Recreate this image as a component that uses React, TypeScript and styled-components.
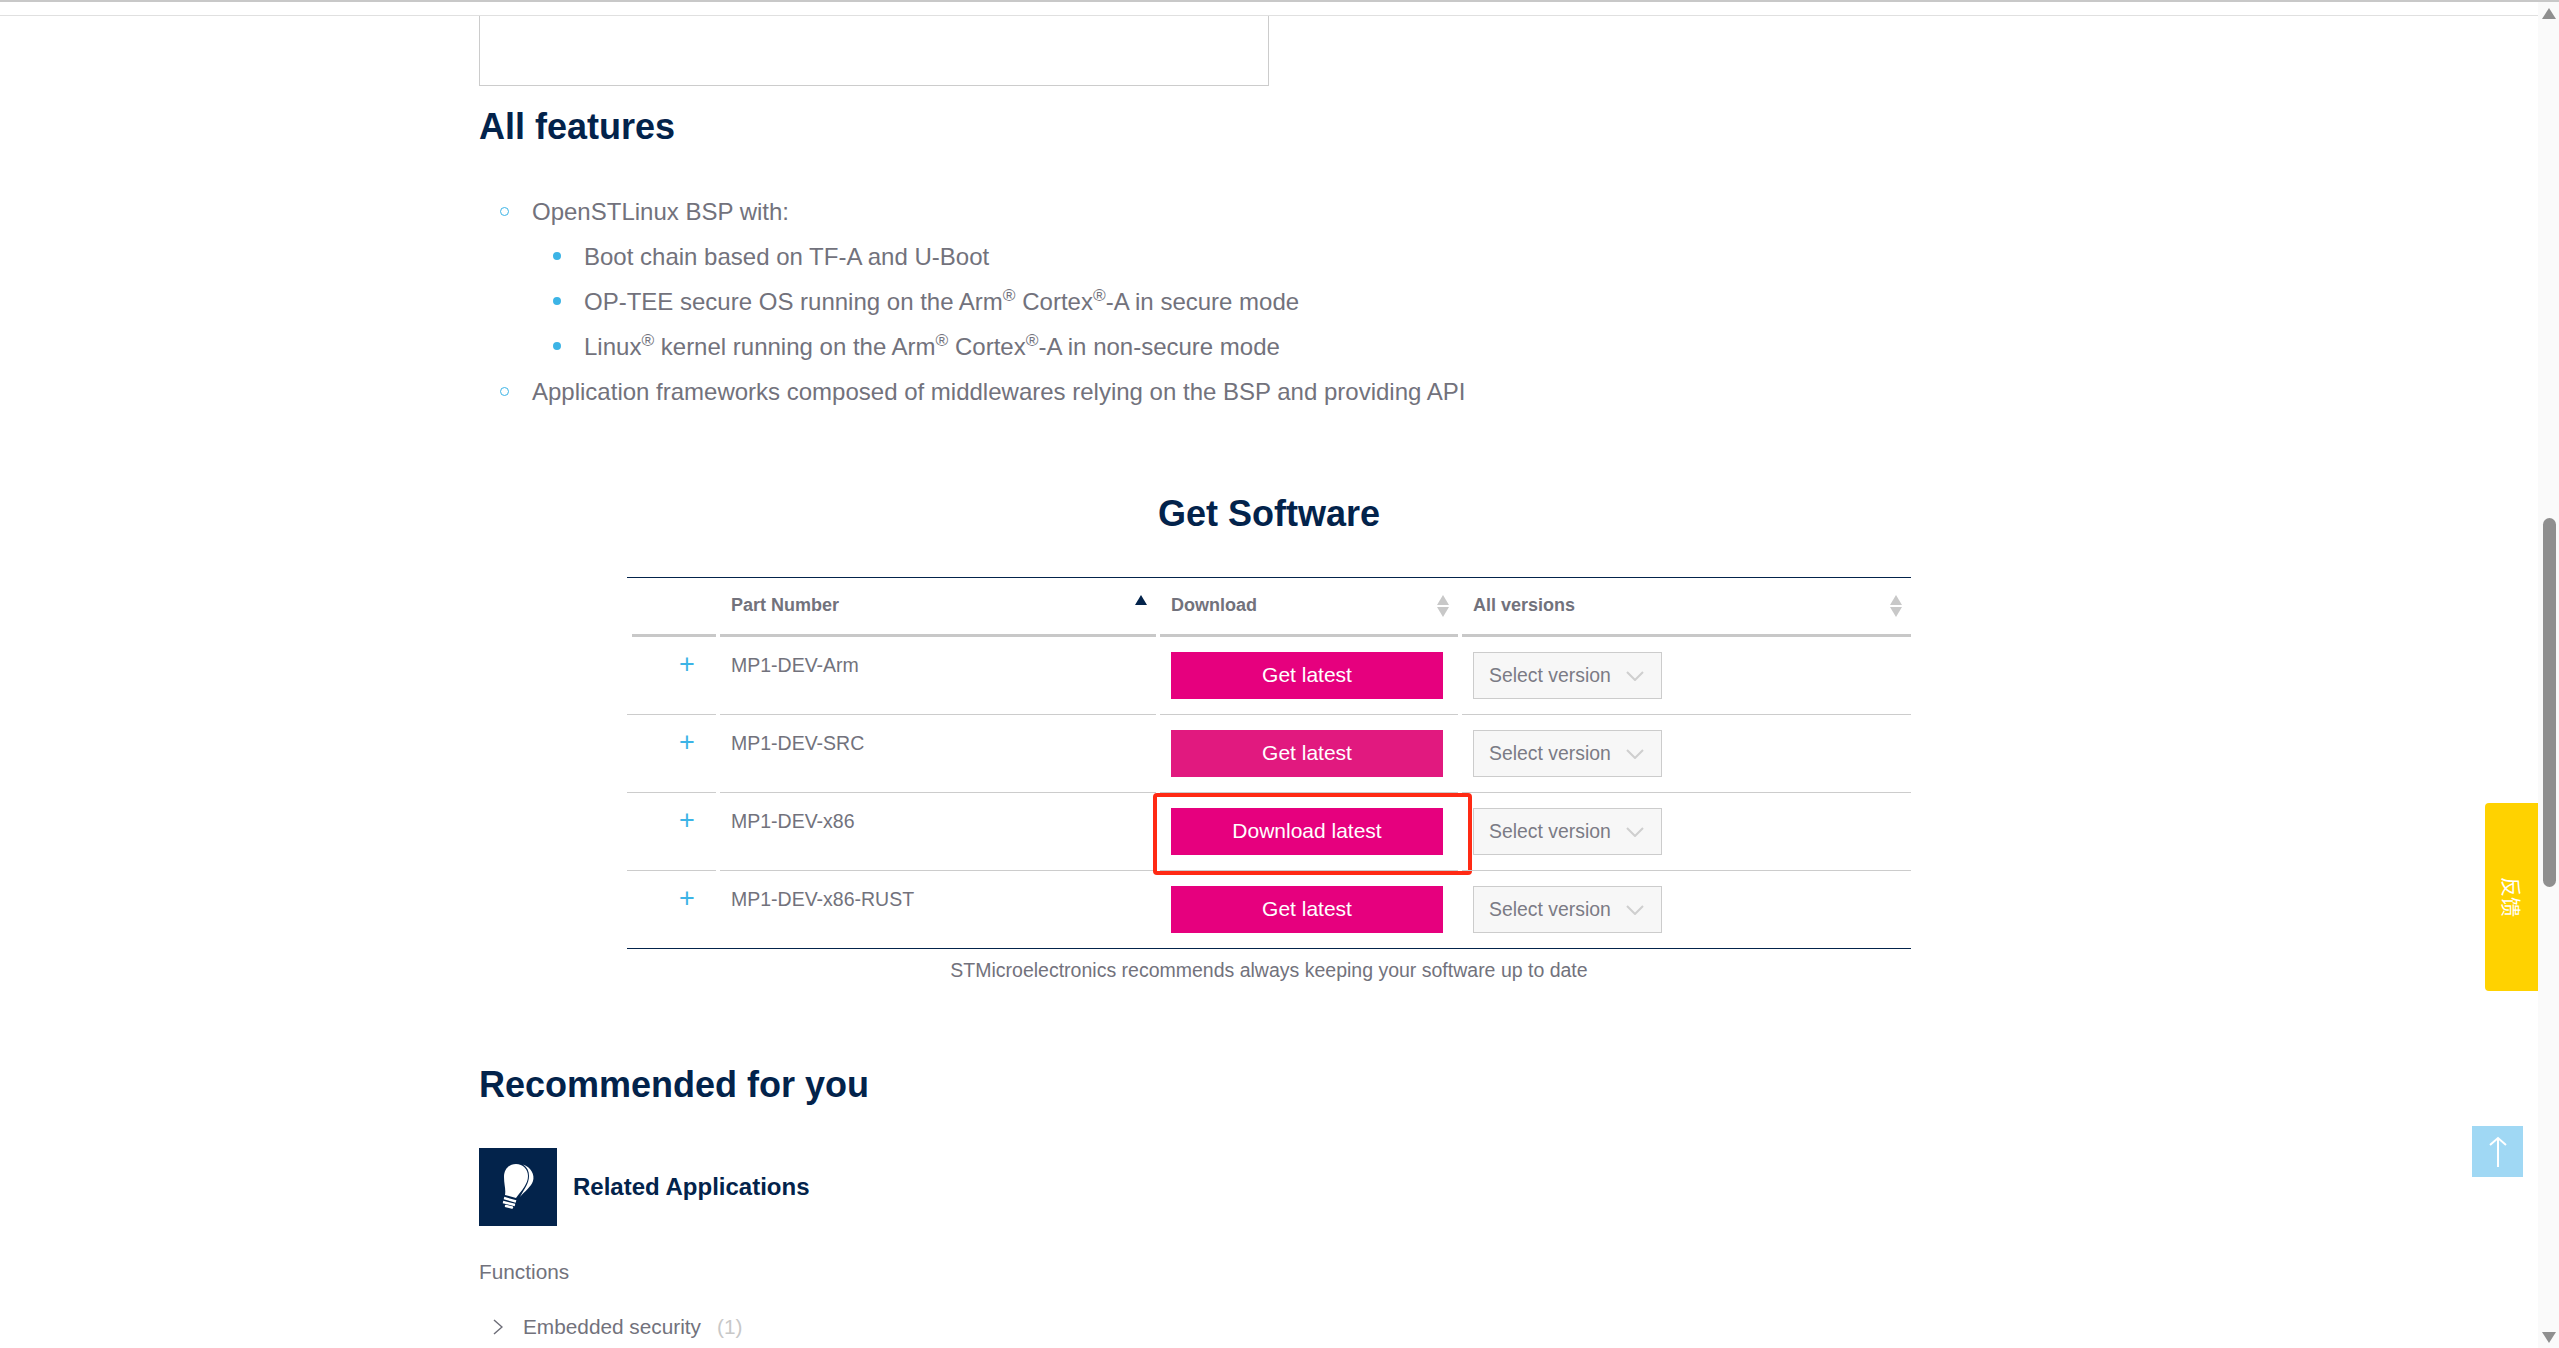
import React from 'react';
import styled, { createGlobalStyle } from 'styled-components';

const GlobalStyle = createGlobalStyle`
  html, body {
    margin: 0;
    height: 100%;
    overflow: hidden;
    background: #fff;
  }
  body {
    font-family: 'Liberation Sans', Arial, sans-serif;
    color: #72727c;
  }
  sup {
    font-size: 0.72em;
    line-height: 0;
  }
`;

const St = {
  Window: styled.div`
    position: relative;
    display: flex;
    height: 1348px;
    overflow: hidden;
    border-top: 2px solid #c8c8c8;
    box-sizing: border-box;
  `,
  Page: styled.main`
    flex: 1;
    min-width: 0;
  `,
  HeaderEdge: styled.div`
    height: 13px;
    border-bottom: 1px solid #e0e0e0;
  `,
  Container: styled.div`
    width: 1580px;
    margin: 0 auto;
  `,
  Frame: styled.div`
    width: 790px;
    height: 70px;
    box-sizing: border-box;
    border: 1px solid #ccc;
    border-top: 0;
    margin-bottom: 19px;
  `,
  Title: styled.h2<{ $center?: boolean }>`
    margin: 0;
    font-size: 36px;
    line-height: 44px;
    font-weight: 700;
    color: #03234b;
    text-align: ${(p) => (p.$center ? 'center' : 'left')};
  `,
  FeatureList: styled.ul`
    list-style: none;
    margin: 40px 0 0;
    padding: 0 0 0 53px;
    font-size: 24px;
    line-height: 45px;
  `,
  SubList: styled.ul`
    list-style: none;
    margin: 0;
    padding: 0 0 0 52px;
  `,
  Item: styled.li<{ $ring?: boolean }>`
    position: relative;
    &::before {
      content: '';
      position: absolute;
      left: ${(p) => (p.$ring ? '-32px' : '-31px')};
      top: 18px;
      width: ${(p) => (p.$ring ? '9px' : '8px')};
      height: ${(p) => (p.$ring ? '9px' : '8px')};
      box-sizing: border-box;
      border-radius: 50%;
      border: ${(p) => (p.$ring ? '1.5px solid #3cb4e6' : '4px solid #3cb4e6')};
    }
  `,
  SoftwareSection: styled.section`
    margin-top: 78px;
  `,
  Table: styled.div`
    width: 1284px;
    margin: 41px auto 0;
    border-top: 1px solid #03234b;
    border-bottom: 1px solid #03234b;
  `,
  HeadRow: styled.div`
    display: grid;
    grid-template-columns: 84px 436px 298px 449px;
    column-gap: 4px;
    margin-left: 5px;
    height: 59px;
  `,
  HeadCell: styled.div`
    position: relative;
    display: flex;
    align-items: flex-start;
    padding: 16px 11px 0;
    font-size: 18px;
    line-height: 22px;
    font-weight: 700;
    border-bottom: 3px solid #c8c8c8;
  `,
  SortIcon: styled.svg`
    position: absolute;
    top: 17px;
    right: 9px;
    width: 12px;
    height: 22px;
  `,
  Row: styled.div`
    display: grid;
    grid-template-columns: 89px 436px 298px 449px;
    column-gap: 4px;
    height: 78px;
    &:last-child {
      height: 77px;
    }
    &:last-child > div {
      border-bottom: 0;
    }
  `,
  Cell: styled.div`
    position: relative;
    box-sizing: border-box;
    padding: 14px 11px 0;
    font-size: 19.5px;
    line-height: 28px;
    border-bottom: 1px solid #ccc;
  `,
  ActionCell: styled.div`
    position: relative;
    box-sizing: border-box;
    padding: 15px 11px 0;
    border-bottom: 1px solid #ccc;
  `,
  PlusCell: styled.div`
    box-sizing: border-box;
    padding: 11px 0 0 52px;
    font-size: 27px;
    line-height: 32px;
    color: #3cb4e6;
    border-bottom: 1px solid #ccc;
  `,
  Button: styled.button<{ $hover?: boolean }>`
    display: block;
    width: 272px;
    height: 47px;
    border: 0;
    padding: 0 0 1px;
    background: ${(p) => (p.$hover ? '#e1197f' : '#e6007e')};
    color: #fff;
    font: 21px 'Liberation Sans', Arial, sans-serif;
  `,
  Highlight: styled.div`
    position: absolute;
    left: -7px;
    top: 0;
    width: 319px;
    height: 82px;
    box-sizing: border-box;
    border: 4px solid #ff2a14;
    border-radius: 4px;
  `,
  Select: styled.div`
    display: flex;
    align-items: center;
    justify-content: space-between;
    width: 189px;
    height: 47px;
    box-sizing: border-box;
    padding: 0 17px 0 15px;
    background: #f7f7f7;
    border: 1px solid #ccc;
    font-size: 19.4px;
    color: #7b7b85;
  `,
  Note: styled.p`
    margin: 9px 0 0;
    text-align: center;
    font-size: 19.5px;
    line-height: 24px;
  `,
  Recommended: styled.section`
    margin-top: 81px;
  `,
  Related: styled.div`
    display: flex;
    align-items: center;
    gap: 16px;
    margin-top: 41px;
    font-size: 24px;
    font-weight: 700;
    color: #03234b;
  `,
  IconBox: styled.div`
    width: 78px;
    height: 78px;
    background: #03234b;
  `,
  Functions: styled.div`
    margin-top: 32px;
    font-size: 20.8px;
    line-height: 28px;
  `,
  Facet: styled.div`
    display: flex;
    align-items: center;
    gap: 20px;
    margin-top: 27px;
    padding-left: 14px;
    font-size: 20.8px;
    line-height: 28px;
  `,
  Count: styled.span`
    margin-left: -4px;
    color: #c8c8c8;
  `,
  Feedback: styled.div`
    position: absolute;
    top: 801px;
    right: 21px;
    width: 53px;
    height: 188px;
    display: flex;
    align-items: center;
    justify-content: center;
    background: #ffd200;
    border-radius: 4px 0 0 4px;
    color: #fff;
    font-family: 'Noto Sans CJK SC', sans-serif;
    font-size: 20px;
    writing-mode: vertical-rl;
    text-orientation: sideways;
  `,
  BackToTop: styled.div`
    position: absolute;
    top: 1124px;
    left: 2472px;
    width: 51px;
    height: 51px;
    display: flex;
    align-items: center;
    justify-content: center;
    background: #a0d8f4;
  `,
  Scrollbar: styled.div`
    display: flex;
    flex-direction: column;
    align-items: center;
    width: 21px;
    background: #fafafa;
  `,
  ScrollArrow: styled.svg<{ $down?: boolean }>`
    width: 14px;
    height: 11px;
    margin-top: ${(p) => (p.$down ? '445px' : '6px')};
  `,
  ScrollThumb: styled.div`
    width: 13px;
    height: 369px;
    margin-top: 499px;
    margin-left: 2px;
    border-radius: 7px;
    background: #8f8f8f;
  `,
};

const parts = [
  { name: 'MP1-DEV-Arm', label: 'Get latest' },
  { name: 'MP1-DEV-SRC', label: 'Get latest', hover: true },
  { name: 'MP1-DEV-x86', label: 'Download latest', marked: true },
  { name: 'MP1-DEV-x86-RUST', label: 'Get latest' },
];

const SortArrows: React.FC<{ active?: boolean }> = ({ active }) => (
  <St.SortIcon viewBox="0 0 12 22">
    <path d="M6 0 L12 10 L0 10 Z" fill={active ? '#03234b' : '#c8c8c8'} />
    {!active && <path d="M0 12 L12 12 L6 22 Z" fill="#c8c8c8" />}
  </St.SortIcon>
);

const SelectChevron = () => (
  <svg width="18" height="10" viewBox="0 0 18 10" fill="none" stroke="#cfcfcf" strokeWidth="2">
    <path d="M1 1 L9 9 L17 1" />
  </svg>
);

const FacetChevron = () => (
  <svg width="10" height="16" viewBox="0 0 10 16" fill="none" stroke="#6e6e78" strokeWidth="1.5">
    <path d="M1 1 L9 8 L1 15" />
  </svg>
);

const BulbIcon = () => (
  <svg width="78" height="78" viewBox="0 0 78 78">
    <path
      d="M37 16 C44 16 49 21 49 28 C49 36 43 42 37 50 L26 47 C27 41 25 37 25 29 C25 21 30 16 37 16 Z"
      fill="#fff"
    />
    <path
      d="M44 16.5 C52 19 56 27 54 33 C52 39 46 43 41 49 C45 41 50 36 50 28 C50 23 48 19 44 16.5 Z"
      fill="#fff"
    />
    <path d="M25 50 L37 53.5 M24 54 L36 57" stroke="#fff" strokeWidth="2.4" />
    <path d="M27 58 L33 59.5" stroke="#fff" strokeWidth="2.4" strokeLinecap="round" />
  </svg>
);

const App: React.FC = () => {
  return (
    <St.Window>
      <GlobalStyle />
      <St.Page>
        <St.HeaderEdge />
        <St.Container>
          <St.Frame />
          <St.Title>All features</St.Title>
          <St.FeatureList>
            <St.Item $ring>
              OpenSTLinux BSP with:
              <St.SubList>
                <St.Item>Boot chain based on TF-A and U-Boot</St.Item>
                <St.Item>
                  OP-TEE secure OS running on the Arm<sup>®</sup> Cortex<sup>®</sup>-A in secure mode
                </St.Item>
                <St.Item>
                  Linux<sup>®</sup> kernel running on the Arm<sup>®</sup> Cortex<sup>®</sup>-A in non-secure mode
                </St.Item>
              </St.SubList>
            </St.Item>
            <St.Item $ring>Application frameworks composed of middlewares relying on the BSP and providing API</St.Item>
          </St.FeatureList>

          <St.SoftwareSection>
            <St.Title $center>Get Software</St.Title>
            <St.Table>
              <St.HeadRow>
                <St.HeadCell />
                <St.HeadCell>
                  Part Number
                  <SortArrows active />
                </St.HeadCell>
                <St.HeadCell>
                  Download
                  <SortArrows />
                </St.HeadCell>
                <St.HeadCell>
                  All versions
                  <SortArrows />
                </St.HeadCell>
              </St.HeadRow>
              {parts.map((part) => (
                <St.Row key={part.name}>
                  <St.PlusCell>+</St.PlusCell>
                  <St.Cell>{part.name}</St.Cell>
                  <St.ActionCell>
                    <St.Button $hover={part.hover}>{part.label}</St.Button>
                    {part.marked && <St.Highlight />}
                  </St.ActionCell>
                  <St.ActionCell>
                    <St.Select>
                      Select version
                      <SelectChevron />
                    </St.Select>
                  </St.ActionCell>
                </St.Row>
              ))}
            </St.Table>
            <St.Note>STMicroelectronics recommends always keeping your software up to date</St.Note>
          </St.SoftwareSection>

          <St.Recommended>
            <St.Title>Recommended for you</St.Title>
            <St.Related>
              <St.IconBox>
                <BulbIcon />
              </St.IconBox>
              Related Applications
            </St.Related>
            <St.Functions>Functions</St.Functions>
            <St.Facet>
              <FacetChevron />
              Embedded security
              <St.Count>(1)</St.Count>
            </St.Facet>
          </St.Recommended>
        </St.Container>
      </St.Page>

      <St.Feedback>反馈</St.Feedback>
      <St.BackToTop>
        <svg width="20" height="32" viewBox="0 0 20 32" fill="none" stroke="#fff" strokeWidth="2">
          <path d="M10 31 V2 M2 9 L10 2 L18 9" />
        </svg>
      </St.BackToTop>

      <St.Scrollbar>
        <St.ScrollArrow viewBox="0 0 14 11">
          <path d="M7 0 L14 11 L0 11 Z" fill="#8f8f8f" />
        </St.ScrollArrow>
        <St.ScrollThumb />
        <St.ScrollArrow $down viewBox="0 0 14 11">
          <path d="M0 0 L14 0 L7 11 Z" fill="#8f8f8f" />
        </St.ScrollArrow>
      </St.Scrollbar>
    </St.Window>
  );
};

export default App;
